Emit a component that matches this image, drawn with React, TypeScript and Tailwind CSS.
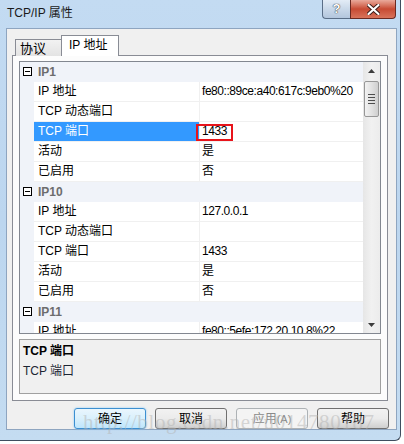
import React from "react";

type Row = { name: string; value: string; selected?: boolean };
type Group = { name: string; rows: Row[] };

const groups: Group[] = [
  {
    name: "IP1",
    rows: [
      { name: "IP 地址", value: "fe80::89ce:a40:617c:9eb0%20" },
      { name: "TCP 动态端口", value: "" },
      { name: "TCP 端口", value: "1433", selected: true },
      { name: "活动", value: "是" },
      { name: "已启用", value: "否" },
    ],
  },
  {
    name: "IP10",
    rows: [
      { name: "IP 地址", value: "127.0.0.1" },
      { name: "TCP 动态端口", value: "" },
      { name: "TCP 端口", value: "1433" },
      { name: "活动", value: "是" },
      { name: "已启用", value: "否" },
    ],
  },
  {
    name: "IP11",
    rows: [
      { name: "IP 地址", value: "fe80::5efe:172.20.10.8%22" },
      { name: "TCP 动态端口", value: "" },
    ],
  },
];

const CategoryRow = ({ name }: { name: string }) => (
  <div className="flex h-[20px] shrink-0 items-center bg-[#f0f3f9]">
    <div className="flex w-[14px] shrink-0 justify-center pl-[1px] pb-[2px]">
      <div className="flex h-[9px] w-[9px] items-center justify-center border border-black bg-white">
        <div className="h-px w-[5px] bg-black" />
      </div>
    </div>
    <span className="pl-[4px] text-[12px] font-bold text-[#6d6d6d]">{name}</span>
  </div>
);

const PropRow = ({ row }: { row: Row }) => (
  <div className="flex h-[20px] shrink-0">
    <div className="w-[14px] shrink-0 bg-[#f0f3f9]" />
    <div
      className={
        row.selected
          ? "w-[166px] shrink-0 border-b border-r border-[#f0f0f0] bg-[#3399ff] pl-[4px] leading-[19px] text-white"
          : "w-[166px] shrink-0 border-b border-r border-[#f0f0f0] bg-white pl-[4px] leading-[19px] text-black"
      }
    >
      {row.name}
    </div>
    <div className="relative flex-1 whitespace-nowrap border-b border-[#f0f0f0] bg-white pl-[2px] leading-[19px] tracking-[-0.45px] text-black">
      {row.value}
      {row.selected && (
        <span className="absolute left-[-4px] top-[2px] h-[17px] w-[37px] border-2 border-[#e8141b]" />
      )}
    </div>
  </div>
);

const Scrollbar = () => (
  <div className="flex w-[17px] shrink-0 flex-col bg-gradient-to-r from-[#e6e6e6] via-[#f1f1f1] to-[#ececec]">
    <div className="flex h-[17px] items-center justify-center">
      <svg width="7" height="4" viewBox="0 0 7 4">
        <path d="M0 4 L3.5 0 L7 4 Z" fill="#3d3d3d" />
      </svg>
    </div>
    <div className="mx-[1px] mt-[2px] flex h-[36px] flex-col items-center justify-center gap-[2px] rounded-[2px] border border-[#979797] bg-gradient-to-r from-[#f2f2f2] via-[#e2e2e2] to-[#cfcfcf]">
      <div className="h-px w-[7px] bg-[#4d4d4d]" />
      <div className="h-px w-[7px] bg-[#4d4d4d]" />
      <div className="h-px w-[7px] bg-[#4d4d4d]" />
      <div className="h-px w-[7px] bg-[#4d4d4d]" />
    </div>
    <div className="flex-1" />
    <div className="flex h-[17px] items-center justify-center">
      <svg width="7" height="4" viewBox="0 0 7 4">
        <path d="M0 0 L3.5 4 L7 0 Z" fill="#3d3d3d" />
      </svg>
    </div>
  </div>
);

const Button = ({
  label,
  variant = "normal",
}: {
  label: React.ReactNode;
  variant?: "default" | "normal" | "disabled";
}) => {
  const cls =
    variant === "default"
      ? "border-[#3c8fd1] bg-gradient-to-b from-[#eaf6fd] via-[#d9f0fc] to-[#bee6fd] text-black shadow-[0_0_2px_#7ec4f6]"
      : variant === "disabled"
        ? "border-[#adb2b5] bg-[#f4f4f4] text-[#8a8a8a]"
        : "border-[#707070] bg-gradient-to-b from-[#f2f2f2] via-[#ebebeb] to-[#cfcfcf] text-black";
  return (
    <div
      className={`flex h-[21px] w-[72px] items-center justify-center rounded-[3px] border text-[12px] ${cls}`}
    >
      {label}
    </div>
  );
};

export default function App() {
  return (
    <div className="relative h-[444px] w-[404px] overflow-hidden bg-white font-['Liberation_Sans','Noto_Sans_CJK_SC',sans-serif] text-[12px]">
      <div className="flex h-[441px] w-[401px] flex-col rounded-br-[6px] border-b border-r border-[#3f4e5f] bg-gradient-to-b from-[#c3dbf2] via-[#bcd6ef] to-[#c4dcf1]">
        {/* title bar */}
        <div className="flex h-[28px] shrink-0 items-start">
          <span className="pl-[7px] pt-[6px] text-[12px] leading-[15px] text-[#1a1a1a]">
            TCP/IP 属性
          </span>
          <div className="flex-1" />
          <div className="mr-[4px] flex h-[19px]">
            <div className="flex w-[28px] items-center justify-center rounded-bl-[4px] border border-t-0 border-r-0 border-[#5a6e87] bg-gradient-to-b from-[#e3ecf6] via-[#c9d8e9] to-[#b3c6dd] text-[13px] font-bold text-white [text-shadow:0_0_1px_#2a2a2a,0_0_1px_#2a2a2a]">
              ?
            </div>
            <div className="flex w-[46px] items-center justify-center rounded-br-[4px] border border-t-0 border-[#6b2a22] bg-gradient-to-b from-[#e9a99b] via-[#c74a33] to-[#d8735b]">
              <svg width="13" height="11" viewBox="0 0 13 11">
                <path
                  d="M1.5 1 L11.5 10 M11.5 1 L1.5 10"
                  stroke="#3a1a16"
                  strokeWidth="4"
                  strokeLinecap="round"
                />
                <path
                  d="M1.5 1 L11.5 10 M11.5 1 L1.5 10"
                  stroke="#ffffff"
                  strokeWidth="2.2"
                  strokeLinecap="round"
                />
              </svg>
            </div>
          </div>
        </div>

        {/* client area */}
        <div className="ml-[6px] mr-[3px] flex h-[402px] flex-col border border-[#8ea5c0] bg-[#f0f0f0]">
          {/* tabs */}
          <div className="relative z-10 -mb-px flex items-end pl-[8px] pt-[6px]">
            <div className="flex h-[17px] w-[47px] items-center border border-b-0 border-[#898c95] bg-gradient-to-b from-[#f2f2f2] to-[#e3e3e3] pl-[4px] text-[13px] leading-[15px]">
              协议
            </div>
            <div className="-ml-px flex h-[21px] w-[58px] items-start border border-b-0 border-[#898c95] bg-white pl-[7px] pt-[2px] text-[12px] leading-[15px]">
              IP 地址
            </div>
          </div>

          {/* tab panel */}
          <div className="ml-[5px] mr-[8px] flex h-[346px] flex-col border border-[#898c95] bg-[#fcfcfc] px-[6px] pb-[6px] pt-[5px]">
            {/* property grid */}
            <div className="flex h-[273px] shrink-0 border border-[#828790] bg-white">
              <div className="flex flex-1 flex-col overflow-hidden">
                {groups.map((g) => (
                  <React.Fragment key={g.name}>
                    <CategoryRow name={g.name} />
                    {g.rows.map((r, i) => (
                      <PropRow key={g.name + i} row={r} />
                    ))}
                  </React.Fragment>
                ))}
              </div>
              <Scrollbar />
            </div>

            {/* description */}
            <div className="mt-[5px] flex h-[55px] flex-col border border-[#a0a0a0] bg-[#f0f0f0] px-[3px] pt-[3px]">
              <span className="font-bold leading-[16px] text-black">TCP 端口</span>
              <span className="mt-[4px] leading-[16px] text-[#1c2533]">TCP 端口</span>
            </div>
          </div>

          {/* buttons */}
          <div className="mt-[7px] flex justify-end gap-[9px] pr-[7px]">
            <Button label="确定" variant="default" />
            <Button label="取消" />
            <Button
              label={
                <span>
                  应用<span className="text-[11px]">(A)</span>
                </span>
              }
              variant="disabled"
            />
            <Button label="帮助" />
          </div>
        </div>
      </div>

      {/* watermark */}
      <div className="pointer-events-none absolute left-[83px] top-[407px] font-['Liberation_Serif',serif] text-[21px] tracking-[0.6px] text-[#b4b4b4]/50">
        http://blog.csdn.net/u014780187
      </div>
    </div>
  );
}
